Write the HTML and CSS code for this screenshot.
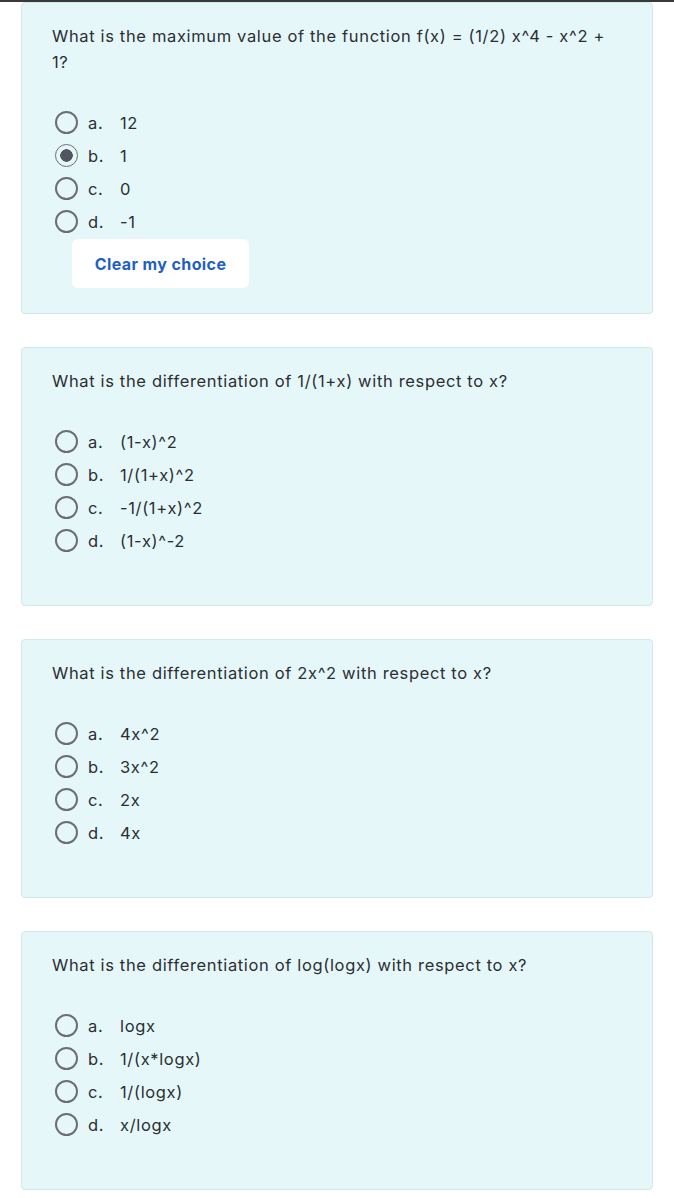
FILE: index.html
```html
<!DOCTYPE html>
<html lang="en">
<head>
  <meta charset="UTF-8" />
  <meta name="viewport" content="width=device-width, initial-scale=1.0" />
  <title>Quiz</title>
  <link rel="stylesheet" href="styles.css">
</head>
<body>
  <div class="topline"></div>

  <div class="quiz">
    <!-- Question 1 -->
    <div class="que">
      <p class="qtext">What is the maximum value of the function f(x) = (1/2) x^4 - x^2 + 1?</p>
      <div class="answer">
        <label class="opt"><span class="radio"></span><span class="letter">a.</span><span class="val">12</span></label>
        <label class="opt"><span class="radio checked"></span><span class="letter">b.</span><span class="val">1</span></label>
        <label class="opt"><span class="radio"></span><span class="letter">c.</span><span class="val">0</span></label>
        <label class="opt"><span class="radio"></span><span class="letter">d.</span><span class="val">-1</span></label>
      </div>
      <button class="clear-btn">Clear my choice</button>
    </div>

    <!-- Question 2 -->
    <div class="que">
      <p class="qtext">What is the differentiation of 1/(1+x) with respect to x?</p>
      <div class="answer">
        <label class="opt"><span class="radio"></span><span class="letter">a.</span><span class="val">(1-x)^2</span></label>
        <label class="opt"><span class="radio"></span><span class="letter">b.</span><span class="val">1/(1+x)^2</span></label>
        <label class="opt"><span class="radio"></span><span class="letter">c.</span><span class="val">-1/(1+x)^2</span></label>
        <label class="opt"><span class="radio"></span><span class="letter">d.</span><span class="val">(1-x)^-2</span></label>
      </div>
    </div>

    <!-- Question 3 -->
    <div class="que">
      <p class="qtext">What is the differentiation of 2x^2 with respect to x?</p>
      <div class="answer">
        <label class="opt"><span class="radio"></span><span class="letter">a.</span><span class="val">4x^2</span></label>
        <label class="opt"><span class="radio"></span><span class="letter">b.</span><span class="val">3x^2</span></label>
        <label class="opt"><span class="radio"></span><span class="letter">c.</span><span class="val">2x</span></label>
        <label class="opt"><span class="radio"></span><span class="letter">d.</span><span class="val">4x</span></label>
      </div>
    </div>

    <!-- Question 4 -->
    <div class="que">
      <p class="qtext">What is the differentiation of log(logx) with respect to x?</p>
      <div class="answer">
        <label class="opt"><span class="radio"></span><span class="letter">a.</span><span class="val">logx</span></label>
        <label class="opt"><span class="radio"></span><span class="letter">b.</span><span class="val">1/(x*logx)</span></label>
        <label class="opt"><span class="radio"></span><span class="letter">c.</span><span class="val">1/(logx)</span></label>
        <label class="opt"><span class="radio"></span><span class="letter">d.</span><span class="val">x/logx</span></label>
      </div>
    </div>
  </div>
</body>
</html>
```

FILE: styles.css
```css
:root {
  --card-bg: #e6f7f9;
  --card-border: #cfe8ec;
  --text: #2b2f33;
  --radio: #6b6e72;
  --link: #1f5fc4;
}

* {
  margin: 0;
  padding: 0;
  box-sizing: border-box;
}

body {
  background: #ffffff;
  color: var(--text);
  font-family: Inter, 'Noto Sans', sans-serif;
  font-size: 16.5px;
  letter-spacing: 0.65px;
}

.topline {
  height: 2px;
  background: #3a3a3a;
}

.quiz {
  display: flex;
  flex-direction: column;
  gap: 33px;
  padding: 0 21px 8px;
}

.que {
  background: var(--card-bg);
  border: 1px solid var(--card-border);
  border-radius: 4px;
  padding: 20px 30px 25px;
}

.qtext {
  line-height: 26px;
  padding-right: 14px;
}

.answer {
  display: flex;
  flex-direction: column;
  margin-top: 31px;
  margin-bottom: 23px;
}

.opt {
  display: flex;
  align-items: center;
  height: 33px;
}

.radio {
  width: 23px;
  height: 23px;
  margin-left: 3px;
  border: 2px solid var(--radio);
  border-radius: 50%;
  flex-shrink: 0;
}

.radio.checked {
  border-width: 1.5px;
  background: radial-gradient(circle, #50555f 0 6px, transparent 6.5px);
}

.letter {
  width: 32px;
  margin-left: 10px;
}

.clear-btn {
  display: block;
  margin: -22px 0 0 20px;
  width: 177px;
  height: 49px;
  background: #ffffff;
  border: none;
  border-radius: 6px;
  color: var(--link);
  font-family: inherit;
  font-size: 16px;
  font-weight: 700;
  letter-spacing: 0.4px;
  cursor: pointer;
}
```
